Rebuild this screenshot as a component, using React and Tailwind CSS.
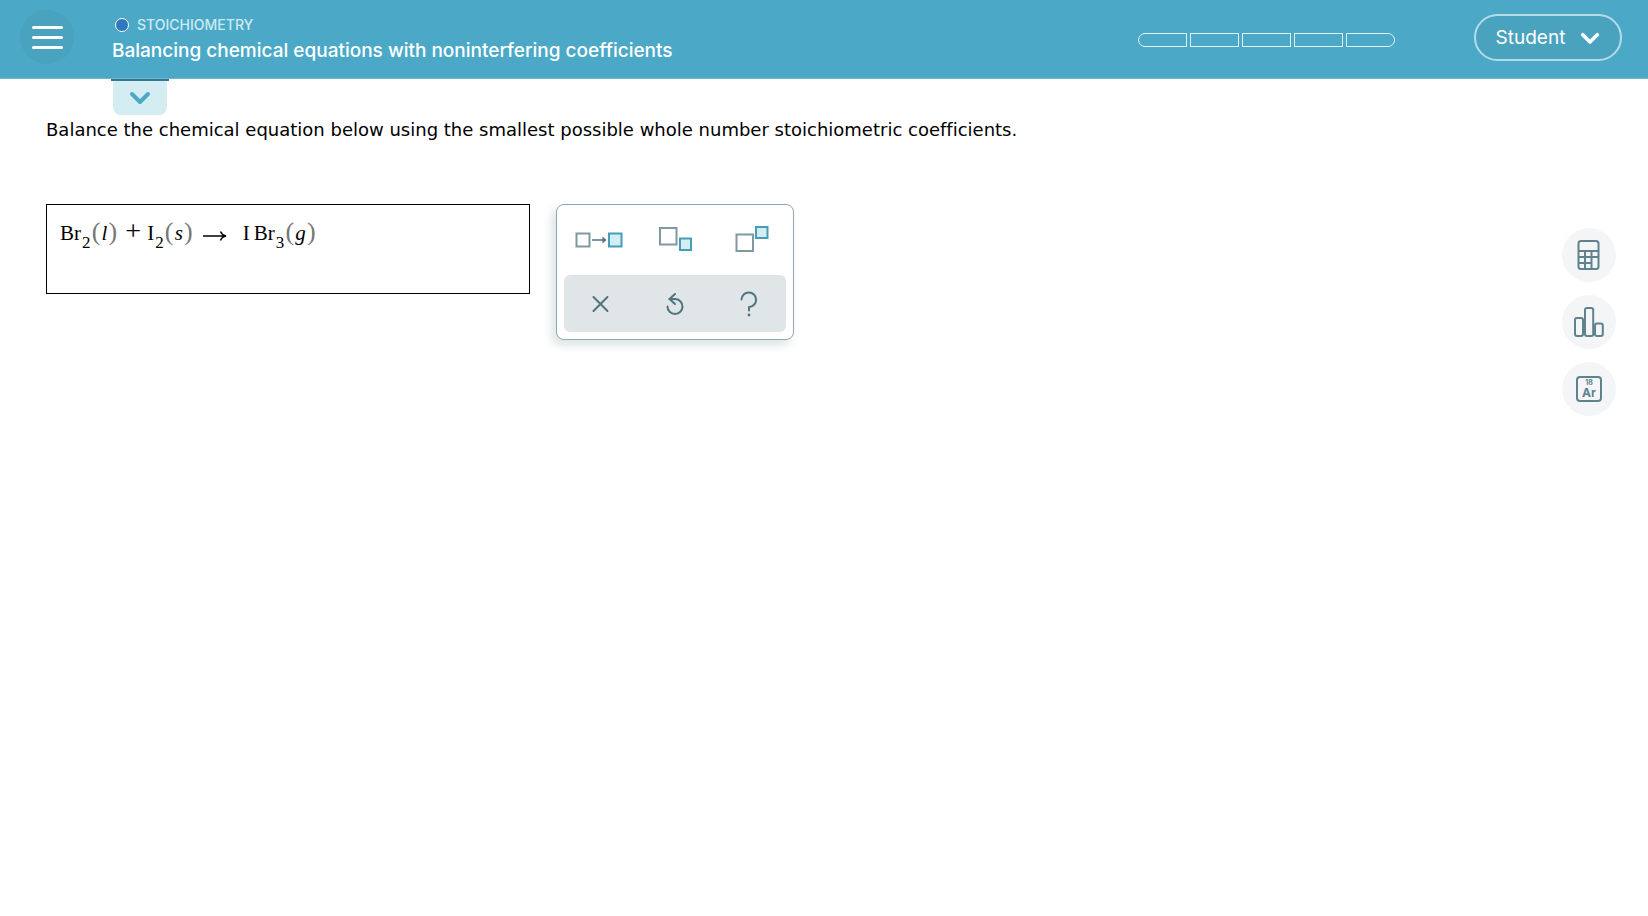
const progressSegments = [
  'rounded-l-full',
  '',
  '',
  '',
  'rounded-r-full',
]

function ReactionIcon() {
  return (
    <svg width="52" height="16" viewBox="0 0 52 16" fill="none">
      <rect x="1.5" y="1.5" width="13" height="13" stroke="#7f98a1" strokeWidth="2" />
      <path d="M17 8h13" stroke="#4f7480" strokeWidth="1.5" />
      <path d="M27.500 4.500l4 3.500-4 3.500z" fill="#4f7480" />
      <rect x="34" y="1.5" width="12.5" height="13" fill="#d3edf2" stroke="#479db5" strokeWidth="2" />
    </svg>
  )
}

function SubscriptIcon() {
  return (
    <svg width="34" height="28" viewBox="0 0 34 28" fill="none">
      <rect x="2" y="2" width="16.5" height="16.5" stroke="#7f98a1" strokeWidth="2" />
      <rect x="22" y="12.5" width="11" height="11.5" fill="#d3edf2" stroke="#479db5" strokeWidth="2" />
    </svg>
  )
}

function SuperscriptIcon() {
  return (
    <svg width="40" height="28" viewBox="0 0 40 28" fill="none">
      <rect x="7.500" y="8.5" width="16.5" height="16.5" stroke="#7f98a1" strokeWidth="2" />
      <rect x="27" y="1" width="11.500" height="11" fill="#d3edf2" stroke="#479db5" strokeWidth="2" />
    </svg>
  )
}

function ClearIcon() {
  return (
    <svg width="24" height="26" viewBox="0 0 24 26" fill="none" stroke="#4f7480" strokeWidth="2" strokeLinecap="round">
      <path d="M4.500 6l14 14M18.500 6l-14 14" />
    </svg>
  )
}

function ResetIcon() {
  return (
    <svg width="24" height="26" viewBox="0 0 24 26" fill="none" stroke="#4f7480" strokeWidth="2" strokeLinecap="round" strokeLinejoin="round">
      <path d="M4.500 15.500a7.500 7.500 0 1 0 7.500-7.500H6.500" />
      <path d="M12 3L6.500 8L12 13" />
    </svg>
  )
}

function HelpIcon() {
  return (
    <svg width="24" height="26" viewBox="0 0 24 26" fill="none" stroke="#4f7480" strokeWidth="2" strokeLinecap="round" strokeLinejoin="round">
      <path d="M4.500 8.500a7.300 7.300 0 1 1 7.500 7.500v3.500" />
      <circle cx="12" cy="24" r="1.4" fill="#4f7480" stroke="none" />
    </svg>
  )
}

function CalculatorIcon() {
  return (
    <svg width="30" height="30" viewBox="0 0 30 30" fill="none" stroke="#5f828e" strokeWidth="2">
      <rect x="4.500" y="1" width="20" height="28" rx="2.5" />
      <path d="M4.500 11h20M4.500 17h20M4.500 23h13M11 11v18M17.500 11v18" />
    </svg>
  )
}

function ChartIcon() {
  return (
    <svg width="30" height="30" viewBox="0 0 30 30" fill="none" stroke="#5f828e" strokeWidth="2">
      <rect x="1" y="11" width="8" height="18" rx="2" />
      <rect x="11" y="1" width="8.200" height="28" rx="2" />
      <rect x="21" y="16.5" width="7.800" height="12.5" rx="2" />
    </svg>
  )
}

function Chevron({ className }) {
  return (
    <svg viewBox="0 0 22 14" fill="none" stroke="currentColor" strokeWidth="4" strokeLinecap="round" strokeLinejoin="round" className={className}>
      <path d="M3 3l8 8 8-8" />
    </svg>
  )
}

function Paren({ children }) {
  return <span className="w-[9px] text-center text-[26px] text-[#777777]">{children}</span>
}

// Element symbol with subscript and a state of matter in parentheses
function Species({ symbol, count, state }) {
  return (
    <span className="flex items-baseline">
      <span>{symbol}</span>
      <sub className="relative top-2 bottom-auto ml-px text-[17px] leading-none">{count}</sub>
      <span className="ml-px flex items-baseline">
        <Paren>(</Paren>
        <i className="px-px">{state}</i>
        <Paren>)</Paren>
      </span>
    </span>
  )
}

function SideButton({ label, children }) {
  return (
    <button aria-label={label} className="flex h-[54px] w-[54px] items-center justify-center rounded-full bg-[#f3f5f6]">
      {children}
    </button>
  )
}

export default function App() {
  return (
    <div className="min-h-screen bg-white font-['Inter',sans-serif]">
      {/* Header */}
      <header className="flex h-[79px] items-start justify-between border-b border-[#6cb8cf] bg-[#4ba9c7] pr-[26px] pl-5">
        <div className="flex items-start">
          <button aria-label="Menu" className="mt-2.5 flex h-[54px] w-[54px] flex-col items-center justify-center gap-[7px] rounded-full bg-[#49a2be]">
            <span className="h-[3px] w-[31px] rounded-full bg-white" />
            <span className="h-[3px] w-[31px] rounded-full bg-white" />
            <span className="h-[3px] w-[31px] rounded-full bg-white" />
          </button>
          <div className="mt-3.5 ml-[38px]">
            <div className="flex h-[22px] items-center gap-2 pl-[3px]">
              <span className="h-3.5 w-3.5 rounded-full border border-white bg-[#2f78bd]" />
              <span className="text-sm font-medium text-[#cdeaf3]">STOICHIOMETRY</span>
            </div>
            <h1 className="text-[19px] leading-[30px] font-medium text-white">Balancing chemical equations with noninterfering coefficients</h1>
          </div>
        </div>

        <div className="flex items-start">
          <div className="mt-[33px] flex gap-[3px]">
            {progressSegments.map((corner, i) => (
              <span key={i} className={`h-3.5 w-[49px] border border-[#dff2f7] ${corner}`} />
            ))}
          </div>
          <button className="mt-3.5 ml-[79px] flex h-[47px] w-[148px] items-center justify-center gap-[15px] rounded-full border-2 border-[#b4dce8] bg-[#49a2be] pt-0.5 text-[19px] text-white">
            Student
            <Chevron className="w-5" />
          </button>
        </div>
      </header>

      <div className="flex justify-between pr-8 pl-[46px]">
        <main>
          {/* Explanation tab */}
          <button aria-label="Show explanation" className="ml-[65px] flex w-[58px] flex-col items-center border-t-2 border-[#38788c]">
            <span className="flex h-[34px] w-[54px] items-center justify-center rounded-b-lg bg-[#d3edf2] text-[#4ba9c7]">
              <Chevron className="w-[22px]" />
            </span>
          </button>

          <p className="font-['DejaVu_Sans',sans-serif] text-lg leading-[30px] text-black [font-variant-ligatures:none]">
            Balance the chemical equation below using the smallest possible whole number stoichiometric coefficients.
          </p>

          <div className="mt-[59px] flex items-start gap-[26px]">
            <div className="flex h-[90px] w-[484px] items-baseline border border-black px-[13px] pt-2.5 font-['Liberation_Serif',serif] text-[21px] leading-8 text-black">
              <Species symbol="Br" count="2" state="l" />
              <span className="ml-2 text-[28px]">+</span>
              <span className="ml-1.5"><Species symbol="I" count="2" state="s" /></span>
              <svg width="24" height="32" viewBox="0 0 24 32" fill="none" stroke="black" strokeWidth="1.5" className="ml-2.5 self-start">
                <path d="M0 21h22M17.500 16.500c1 2.500 3 4 5.500 4.500c-2.500.5-4.500 2-5.500 4.500" />
              </svg>
              <span className="ml-4">I</span>
              <span className="ml-1"><Species symbol="Br" count="3" state="g" /></span>
            </div>

            {/* Symbol palette */}
            <div className="w-[238px] rounded-lg border border-[#8fa8b1] bg-white p-[7px] shadow-[-4px_5px_10px_rgba(80,110,120,0.2)]">
              <div className="grid h-[63px] grid-cols-3 place-items-center pb-2">
                <button aria-label="Reaction arrow"><ReactionIcon /></button>
                <button aria-label="Subscript"><SubscriptIcon /></button>
                <button aria-label="Superscript"><SuperscriptIcon /></button>
              </div>
              <div className="grid h-[57px] grid-cols-3 place-items-center rounded-md bg-[#e0e6e8]">
                <button aria-label="Clear"><ClearIcon /></button>
                <button aria-label="Undo"><ResetIcon /></button>
                <button aria-label="Help"><HelpIcon /></button>
              </div>
            </div>
          </div>
        </main>

        {/* Side tools */}
        <aside className="mt-[149px] flex flex-col gap-[13px]">
          <SideButton label="Calculator"><CalculatorIcon /></SideButton>
          <SideButton label="Data"><ChartIcon /></SideButton>
          <SideButton label="Periodic table">
            <span className="flex h-[26px] w-[26px] flex-col items-center justify-center rounded-sm border-2 border-[#5f828e] font-bold text-[#5f828e]">
              <span className="text-[7px] leading-[8px]">18</span>
              <span className="text-xs leading-3">Ar</span>
            </span>
          </SideButton>
        </aside>
      </div>
    </div>
  )
}
